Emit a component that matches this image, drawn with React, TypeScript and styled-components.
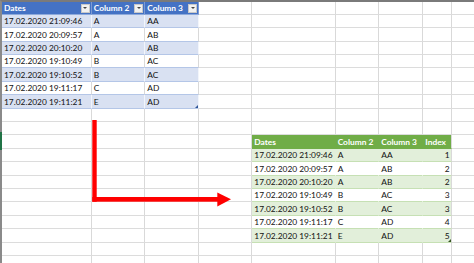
import React from "react";
import styled, { createGlobalStyle, css } from "styled-components";

const Global = createGlobalStyle`
  html, body { margin: 0; padding: 0; background: #fff; }
  body { font-family: "Lato", "Liberation Sans", sans-serif; }
`;

type Kind = "blank" | "bhead" | "bband" | "bplain" | "ghead" | "gband" | "gplain";

interface CellData {
  text?: string;
  kind: Kind;
  right?: boolean;
  filter?: boolean;
  handle?: "blue" | "green";
  lastCol?: boolean;
}

const COLS = [89.7, 53.6, 54, 53, 83.4, 43.6, 44, 28.4, 40];
const ROW_H = 13.42;
const ROW_COUNT = 20;

const rows = [12.7, ...Array.from({ length: ROW_COUNT - 1 }, () => ROW_H)];

const leftData = [
  ["Dates", "Column 2", "Column 3"],
  ["17.02.2020 21:09:46", "A", "AA"],
  ["17.02.2020 20:09:57", "A", "AB"],
  ["17.02.2020 20:10:20", "A", "AB"],
  ["17.02.2020 19:10:49", "B", "AC"],
  ["17.02.2020 19:10:52", "B", "AC"],
  ["17.02.2020 19:11:17", "C", "AD"],
  ["17.02.2020 19:11:21", "E", "AD"],
];

const rightData = [
  ["Dates", "Column 2", "Column 3", "Index"],
  ["17.02.2020 21:09:46", "A", "AA", "1"],
  ["17.02.2020 20:09:57", "A", "AB", "2"],
  ["17.02.2020 20:10:20", "A", "AB", "2"],
  ["17.02.2020 19:10:49", "B", "AC", "3"],
  ["17.02.2020 19:10:52", "B", "AC", "3"],
  ["17.02.2020 19:11:17", "C", "AD", "4"],
  ["17.02.2020 19:11:21", "E", "AD", "5"],
];

const RIGHT_TOP = 10;
const RIGHT_LEFT = 4;

function buildGrid(): CellData[][] {
  const grid: CellData[][] = [];
  for (let r = 0; r < ROW_COUNT; r++) {
    const row: CellData[] = [];
    for (let c = 0; c < COLS.length; c++) {
      let cell: CellData = { kind: "blank" };
      if (r < leftData.length && c < 3) {
        const text = leftData[r][c];
        if (r === 0) cell = { text, kind: "bhead", filter: true };
        else cell = { text, kind: r % 2 === 1 ? "bband" : "bplain" };
        if (r === leftData.length - 1 && c === 2) cell.handle = "blue";
      }
      const rr = r - RIGHT_TOP;
      const cc = c - RIGHT_LEFT;
      if (rr >= 0 && rr < rightData.length && cc >= 0 && cc < 4) {
        const text = rightData[rr][cc];
        if (rr === 0) cell = { text, kind: "ghead" };
        else cell = { text, kind: rr % 2 === 1 ? "gband" : "gplain", right: cc === 3 };
        cell.lastCol = cc === 3;
        if (rr === rightData.length - 1 && cc === 3) cell.handle = "green";
      }
      row.push(cell);
    }
    grid.push(row);
  }
  return grid;
}

const Page = styled.div`
  position: relative;
  width: 474px;
  height: 263px;
  overflow: hidden;
`;

const Sheet = styled.div`
  display: grid;
  grid-template-columns: ${COLS.map((w) => `${w}px`).join(" ")};
  grid-template-rows: ${rows.map((h) => `${h}px`).join(" ")};
  border-top: 2px solid #7a7a7a;
  border-left: 2px solid #8a8a8a;
  box-sizing: border-box;
  width: 474px;
  height: 263px;
  overflow: hidden;
`;

const kindStyles: Record<Kind, ReturnType<typeof css>> = {
  blank: css`
    background: #fff;
  `,
  bhead: css`
    background: #4472c4;
    color: #fff;
    font-weight: 700;
    border-right-color: #7d9bd3;
    border-bottom-color: #8eaadb;
  `,
  bband: css`
    background: #d9e1f2;
    border-right-color: #f2f5fb;
    border-bottom-color: #b4c6e7;
  `,
  bplain: css`
    background: #fff;
    border-bottom-color: #b4c6e7;
  `,
  ghead: css`
    background: #70ad47;
    color: #fff;
    font-weight: 700;
    border-right-color: #70ad47;
    border-bottom-color: #70ad47;
  `,
  gband: css`
    background: #e2efda;
    border-right-color: #e2efda;
    border-bottom-color: #c6e0b4;
  `,
  gplain: css`
    background: #fff;
    border-right-color: #fff;
    border-bottom-color: #c6e0b4;
  `,
};

const Cell = styled.div<{ $kind: Kind; $right?: boolean; $lastCol?: boolean }>`
  position: relative;
  box-sizing: border-box;
  border-right: 1px solid #d9d9d9;
  border-bottom: 1px solid #dcdcdc;
  display: flex;
  align-items: center;
  justify-content: ${(p) => (p.$right ? "flex-end" : "space-between")};
  padding: 1px 1px 0 2px;
  font-size: 8.4px;
  line-height: 1;
  color: #111;
  white-space: nowrap;
  overflow: visible;
  min-width: 0;
  ${(p) => kindStyles[p.$kind]}
  ${(p) => p.$lastCol && css`border-right-color: #d9d9d9;`}
`;

const FilterButton = styled.span`
  flex: none;
  width: 7px;
  height: 7px;
  margin-left: 2px;
  background: #f1f1f1;
  border: 1px solid #c8c8c8;
  display: flex;
  align-items: center;
  justify-content: center;
  &::after {
    content: "";
    border-left: 2px solid transparent;
    border-right: 2px solid transparent;
    border-top: 2.5px solid #444;
  }
`;

const Handle = styled.span<{ $color: string }>`
  position: absolute;
  right: 0;
  bottom: 0;
  width: 0;
  height: 0;
  border-left: 3px solid transparent;
  border-bottom: 3px solid ${(p) => p.$color};
`;

const RowMark = styled.div`
  position: absolute;
  left: 0;
  top: 132px;
  width: 2px;
  height: 18px;
  background: #217346;
`;

const ArrowSvg = styled.svg`
  position: absolute;
  left: 0;
  top: 0;
  pointer-events: none;
`;

export default function App() {
  const grid = buildGrid();
  return (
    <>
      <Global />
      <Page>
        <Sheet>
          {grid.map((row, r) =>
            row.map((cell, c) => (
              <Cell key={`${r}-${c}`} $kind={cell.kind} $right={cell.right} $lastCol={cell.lastCol}>
                {cell.text && <span>{cell.text}</span>}
                {cell.filter && <FilterButton />}
                {cell.handle && <Handle $color={cell.handle === "blue" ? "#2f5597" : "#375623"} />}
              </Cell>
            ))
          )}
        </Sheet>
        <RowMark />
        <ArrowSvg width={474} height={263} viewBox="0 0 474 263">
          <rect x={92.3} y={120} width={4.4} height={81.7} fill="#ff0000" />
          <rect x={92.3} y={197} width={126} height={4.7} fill="#ff0000" />
          <polygon points="217.3,192.4 231,199.3 217.3,206.4" fill="#ff0000" />
        </ArrowSvg>
      </Page>
    </>
  );
}
